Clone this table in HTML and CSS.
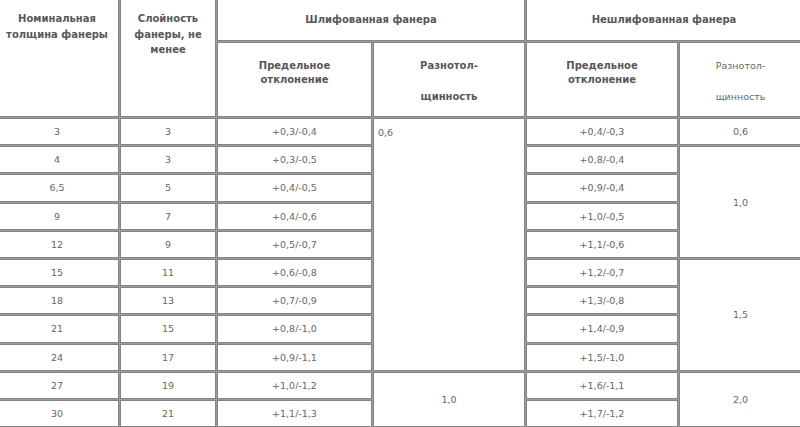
FILE: index.html
```
<!DOCTYPE html>
<html lang="ru">
<head>
<meta charset="utf-8">
<title>Толщина фанеры</title>
<link rel="stylesheet" href="styles.css">
</head>
<body>
<div class="frame">
<table class="spec">
<colgroup>
<col class="c1"><col class="c2"><col class="c3"><col class="c4"><col class="c5"><col class="c6">
</colgroup>
<thead>
<tr class="h1">
<th rowspan="2" class="side">Номинальная<br>толщина фанеры</th>
<th rowspan="2" class="side">Слойность<br>фанеры, не<br>менее</th>
<th colspan="2">Шлифованная фанера</th>
<th colspan="2">Нешлифованная фанера</th>
</tr>
<tr class="h2">
<th class="sub">Предельное<br>отклонение</th>
<th class="sub two">Разнотол-<br><br>щинность</th>
<th class="sub">Предельное<br>отклонение</th>
<th class="sub two light">Разнотол-<br><br>щинность</th>
</tr>
</thead>
<tbody>
<tr><td>3</td><td>3</td><td>+0,3/-0,4</td><td rowspan="9" class="note">0,6</td><td>+0,4/-0,3</td><td>0,6</td></tr>
<tr><td>4</td><td>3</td><td>+0,3/-0,5</td><td>+0,8/-0,4</td><td rowspan="4">1,0</td></tr>
<tr><td>6,5</td><td>5</td><td>+0,4/-0,5</td><td>+0,9/-0,4</td></tr>
<tr><td>9</td><td>7</td><td>+0,4/-0,6</td><td>+1,0/-0,5</td></tr>
<tr><td>12</td><td>9</td><td>+0,5/-0,7</td><td>+1,1/-0,6</td></tr>
<tr><td>15</td><td>11</td><td>+0,6/-0,8</td><td>+1,2/-0,7</td><td rowspan="4">1,5</td></tr>
<tr><td>18</td><td>13</td><td>+0,7/-0,9</td><td>+1,3/-0,8</td></tr>
<tr><td>21</td><td>15</td><td>+0,8/-1,0</td><td>+1,4/-0,9</td></tr>
<tr><td>24</td><td>17</td><td>+0,9/-1,1</td><td>+1,5/-1,0</td></tr>
<tr><td>27</td><td>19</td><td>+1,0/-1,2</td><td rowspan="2">1,0</td><td>+1,6/-1,1</td><td rowspan="2">2,0</td></tr>
<tr><td>30</td><td>21</td><td>+1,1/-1,3</td><td>+1,7/-1,2</td></tr>
</tbody>
</table>
</div>
</body>
</html>
```
FILE: styles.css
```
html, body {
  margin: 0;
  padding: 0;
  background: #fff;
}

.frame {
  width: 800px;
  height: 427px;
  overflow: hidden;
}

.spec {
  margin: -3px 0 0 -6px;
  width: 809px;
  table-layout: fixed;
  border-collapse: separate;
  border-spacing: 1px;
  border: 0;
  background: #9a9a9a;
  font-family: "DejaVu Sans", Verdana, sans-serif;
  font-size: 9.5px;
  color: #666;
}

.c1 { width: 124px; }
.c2 { width: 96px; }
.c3 { width: 155px; }
.c4 { width: 152px; }
.c5 { width: 152px; }
.c6 { width: 123px; }

.spec th,
.spec td {
  box-sizing: border-box;
  border: 1px solid #858585;
  background: #fff;
  text-align: center;
  vertical-align: middle;
  padding: 0 4px;
  line-height: 15px;
}

.spec th {
  font-size: 10px;
  font-weight: bold;
  color: #585858;
}

.h1 { height: 43px; }
.h2 { height: 75px; }
.spec tbody tr { height: 27.2px; }

.spec th.side {
  vertical-align: top;
  padding-top: 12px;
  line-height: 15.5px;
}

.spec th.sub {
  vertical-align: top;
  padding-top: 16px;
  line-height: 14px;
}

.spec th.two {
  padding-top: 15px;
  line-height: 15.5px;
}

.spec th.light {
  font-weight: normal;
  font-size: 9.5px;
  color: #666;
}

.spec td.note {
  vertical-align: top;
  text-align: left;
  padding: 6px 4px 0;
}
```
